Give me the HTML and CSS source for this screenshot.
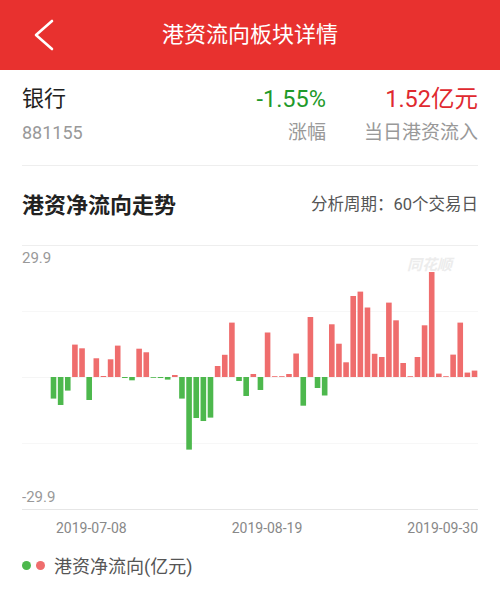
FILE: index.html
```html
<!DOCTYPE html>
<html lang="zh-CN">
<head>
<meta charset="UTF-8">
<meta name="viewport" content="width=device-width, initial-scale=1.0">
<title>港资流向板块详情</title>
<link rel="stylesheet" href="styles.css">
</head>
<body>

<div class="header">
  <div class="back">
    <svg width="20" height="32" viewBox="0 0 20 32">
      <polyline points="18,2 2,16 18,30" fill="none" stroke="#fff" stroke-width="2.6" stroke-linecap="round" stroke-linejoin="round"/>
    </svg>
  </div>
  <div class="title">港资流向板块详情</div>
  <div></div>
</div>

<div class="info">
  <div class="name">银行</div>
  <div class="value down">-1.55%</div>
  <div class="value up">1.52亿元</div>
  <div class="code">881155</div>
  <div class="label">涨幅</div>
  <div class="label">当日港资流入</div>
</div>

<div class="section-head">
  <div class="section-title">港资净流向走势</div>
  <div class="period">分析周期：60个交易日</div>
</div>

<div class="chart">
  <svg id="bars" width="456" height="266" viewBox="0 0 456 266">
    <line x1="0" y1="1.5" x2="456" y2="1.5" stroke="#eeeeee"/>
    <line x1="0" y1="67.5" x2="456" y2="67.5" stroke="#f7f7f7"/>
    <line x1="0" y1="133.5" x2="456" y2="133.5" stroke="#f5f5f5"/>
    <line x1="0" y1="199.5" x2="456" y2="199.5" stroke="#f7f7f7"/>
    <line x1="0" y1="265.5" x2="456" y2="265.5" stroke="#e6e6e6"/>
    <text class="axis" x="0" y="19">29.9</text>
    <text class="axis" x="0" y="258">-29.9</text>
    <text class="watermark" x="385" y="26">同花顺</text>
  </svg>
</div>

<div class="dates">
  <span>2019-07-08</span>
  <span>2019-08-19</span>
  <span>2019-09-30</span>
</div>

<div class="legend">
  <span class="dot green"></span>
  <span class="dot red"></span>
  <span class="legend-text">港资净流向(亿元)</span>
</div>

<script>
  // net flow per trading day, 亿元
  const flows = [
    -4.89, -6.34, -3.08, 7.34, 6.50, -5.21, 4.24, 0.23, 4.01, 7.11,
    -0.23, -0.75, 6.41, 5.60, -0.10, -0.23, -0.59, 0.45, -4.89, -16.45,
    -9.29, -9.97, -9.20, 2.49, 5.03, 12.32, -0.91, -4.30, 0.68, -2.94,
    10.08, 0.07, 0.16, 0.68, 5.32, -6.50, 13.59, -2.49, -4.19, 11.94,
    7.54, 3.33, 18.35, 19.34, 15.74, 5.26, 4.53, 16.85, 12.84, 3.17,
    0.11, 4.53, 11.71, 23.78, 0.77, 0.09, 5.07, 12.32, 1.00, 1.45
  ];

  const svg = document.getElementById('bars');
  const zero = 133;
  const scale = 132 / 29.9;

  flows.forEach(function(v, i) {
    const h = Math.max(Math.abs(v) * scale, 0.8);
    const bar = document.createElementNS('http://www.w3.org/2000/svg', 'rect');
    bar.setAttribute('x', (28.7 + i * 7.136).toFixed(2));
    bar.setAttribute('y', v >= 0 ? zero - h : zero);
    bar.setAttribute('width', 5.6);
    bar.setAttribute('height', h);
    bar.setAttribute('class', v >= 0 ? 'bar-up' : 'bar-down');
    svg.appendChild(bar);
  });
</script>

</body>
</html>
```

FILE: styles.css
```css
body {
  margin: 0;
  padding: 0;
  background-color: #fff;
  font-family: Roboto, "Noto Sans CJK SC", sans-serif;
  color: #222;
}
.header {
  height: 70px;
  background-color: #e8312f;
  display: grid;
  grid-template-columns: 70px 1fr 70px;
  align-items: center;
}
.back {
  padding-left: 34px;
  height: 32px;
}
.back svg {
  display: block;
}
.title {
  text-align: center;
  color: #fff;
  font-size: 22px;
  line-height: 30px;
}
.info {
  margin: 0 22px;
  padding: 14px 0 19px;
  border-bottom: 1px solid #eeeeee;
  display: grid;
  grid-template-columns: 1fr 110px 152px;
  grid-template-rows: 30px 26px;
  row-gap: 6px;
  align-items: center;
}
.name {
  font-size: 22px;
  line-height: 30px;
  color: #222;
}
.value {
  font-size: 23.5px;
  line-height: 30px;
  text-align: right;
}
.down {
  color: #1f9a2b;
}
.up {
  color: #e0292f;
}
.code {
  font-size: 18px;
  line-height: 26px;
  color: #999;
}
.label {
  font-size: 19px;
  line-height: 26px;
  color: #999;
  text-align: right;
}
.section-head {
  margin: 22px 22px 0;
  display: flex;
  justify-content: space-between;
  align-items: center;
  height: 30px;
}
.section-title {
  font-size: 22px;
  font-weight: bold;
  color: #222;
}
.period {
  font-size: 16.5px;
  color: #555;
}
.chart {
  margin: 26px 22px 0;
  height: 266px;
}
.chart svg {
  display: block;
}
.axis {
  font-family: Roboto, sans-serif;
  font-size: 15px;
  fill: #999;
}
.watermark {
  font-family: "Noto Sans CJK SC", sans-serif;
  font-size: 15px;
  font-weight: bold;
  font-style: italic;
  fill: #ececec;
}
.bar-up {
  fill: #ef6d6d;
}
.bar-down {
  fill: #4db84d;
}
.dates {
  margin: 9px 22px 0 56px;
  display: flex;
  justify-content: space-between;
  font-size: 14px;
  line-height: 18px;
  color: #888;
}
.legend {
  margin: 15px 22px 0;
  display: flex;
  align-items: center;
  height: 26px;
}
.dot {
  width: 9px;
  height: 9px;
  border-radius: 50%;
  margin-right: 5px;
}
.dot.green {
  background-color: #4db84d;
}
.dot.red {
  background-color: #ef6d6d;
  margin-right: 9px;
}
.legend-text {
  font-size: 18px;
  color: #555;
}
```
